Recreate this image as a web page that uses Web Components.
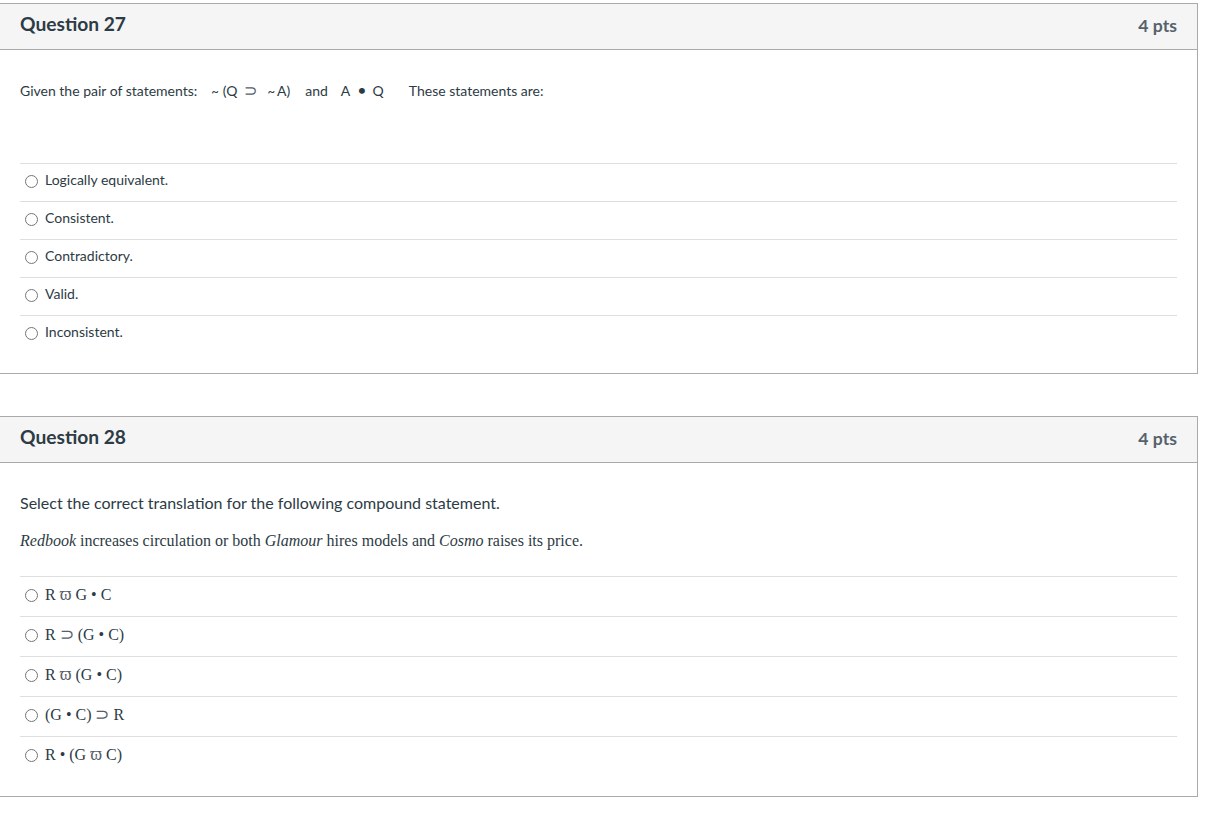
<!DOCTYPE html>
<html><head><meta charset="utf-8">
<style>
html,body{margin:0;background:#fff}
body{padding:3px 33px 0 0;font-family:Lato,sans-serif;color:#2d3b45}
</style></head><body>
<template id="qc"><style>
:host{display:block;border:1px solid #aaa;border-left:none;margin-bottom:42px}
header{display:flex;justify-content:space-between;align-items:center;box-sizing:border-box;height:46px;padding:0 20px 7px;background:#f5f5f5;border-bottom:1px solid #aaa}
.t{font-size:19.2px;font-weight:700;color:#2d3b45}
.p{font-size:17.6px;font-weight:700;color:#56626b;padding-top:5px}
.b{padding:0 20px}
</style><header><span class="t"><slot name="title"></slot></span><span class="p"><slot name="pts"></slot></span></header><div class="b"><slot></slot></div></template>
<template id="qo"><style>
:host{display:flex;align-items:center;gap:7px;box-sizing:border-box;height:var(--h,38px);border-top:1px solid #dedede;padding:0 0 4px 5px;font-size:14px;color:#2d3b45}
i{display:block;box-sizing:border-box;width:13px;height:13px;border:1px solid #767676;border-radius:50%;background:#fff;flex:none;margin:1px 0 0 0}
span{padding-bottom:var(--pb,2px)}
</style><i></i><span><slot></slot></span></template>
<script>
for(const [n,id] of [['q-card','qc'],['q-option','qo']]){
customElements.define(n,class extends HTMLElement{constructor(){super();this.attachShadow({mode:'open'}).appendChild(document.getElementById(id).content.cloneNode(true))}});
}
class QBody extends HTMLElement{constructor(){super();this.attachShadow({mode:'open'}).innerHTML='<style>:host{display:block}</style><slot></slot>'}}
customElements.define('q-body',QBody);
</script>
<style>
.s{font-family:"Liberation Serif",serif;font-size:16px;--h:40px;--pb:0px}
.sup{display:inline-block;font-family:"DejaVu Sans",serif;font-weight:200;font-size:16px;line-height:14px;color:#55606a}
.o{display:inline-block;font-family:"DejaVu Sans",serif;font-weight:200;font-size:17px;line-height:14px;color:#55606a}
.w{display:inline-block;line-height:14px;font-size:18px;color:#55606a}
.st{white-space:pre}
.st span{display:inline-block}
</style>
<q-card>
<span slot="title">Question 27</span><span slot="pts">4 pts</span>
<q-body class="st" style="height:113px;font-size:14px;padding-top:32px;box-sizing:border-box;line-height:17px">Given the pair of statements:<span style="font-size:13px;margin-left:14px">~</span><span style="margin-left:4px">(Q</span><span class="sup" style="margin-left:7px">⊃</span><span style="font-size:13px;margin-left:10px">~</span><span style="margin-left:2px">A)</span><span style="margin-left:15px">and</span><span style="margin-left:13px">A</span><span style="font-size:16px;line-height:14px;margin-left:7px">•</span><span style="margin-left:6px">Q</span><span style="margin-left:25px">These statements are:</span></q-body>
<q-option>Logically equivalent.</q-option>
<q-option>Consistent.</q-option>
<q-option>Contradictory.</q-option>
<q-option>Valid.</q-option>
<q-option>Inconsistent.</q-option>
<div style="height:20px"></div>
</q-card>
<q-card>
<span slot="title">Question 28</span><span slot="pts">4 pts</span>
<q-body style="height:113px;padding-top:30px;box-sizing:border-box">
<div style="font-size:16px;line-height:20px">Select the correct translation for the following compound statement.</div>
<div style="font-family:'Liberation Serif',serif;font-size:16px;line-height:18px;margin-top:19px"><em>Redbook</em> increases circulation or both <em>Glamour</em> hires models and <em>Cosmo</em> raises its price.</div>
</q-body>
<q-option class="s">R <span class="w">ϖ</span> G • C</q-option>
<q-option class="s">R <span class="o">⊃</span> (G • C)</q-option>
<q-option class="s">R <span class="w">ϖ</span> (G • C)</q-option>
<q-option class="s">(G • C) <span class="o">⊃</span> R</q-option>
<q-option class="s">R • (G <span class="w">ϖ</span> C)</q-option>
<div style="height:20px"></div>
</q-card>
</body></html>
